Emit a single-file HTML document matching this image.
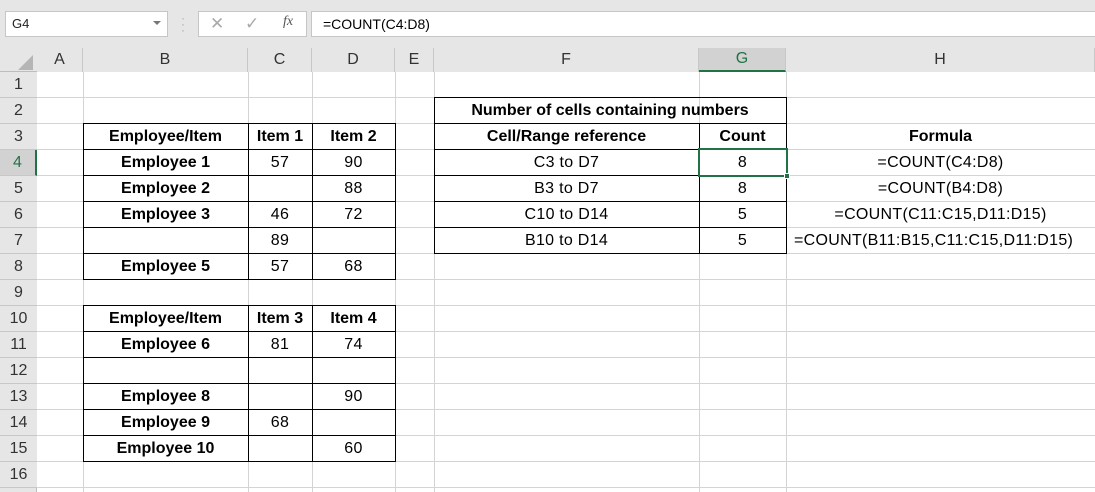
<!DOCTYPE html>
<html><head><meta charset="utf-8"><style>
*{margin:0;padding:0;box-sizing:border-box}
body{width:1095px;height:492px;overflow:hidden;background:#fff;font-family:"Liberation Sans",sans-serif;position:relative}
.a{position:absolute}
.top{left:0;top:0;width:1095px;height:48px;background:#e6e6e6}
.box{background:#fff;border:1px solid #c6c6c6}
.t{position:absolute;display:flex;align-items:center;justify-content:center;font-size:16px;letter-spacing:0.3px;color:#000;white-space:nowrap}
.b{font-weight:bold;letter-spacing:0}
.hd{position:absolute;display:flex;align-items:center;justify-content:center;font-size:16px;color:#333;background:#e6e6e6}
.k{position:absolute;border:1px solid #000}
</style></head><body>
<div class="a top"></div>
<div class="a box" style="left:5px;top:11px;width:163px;height:26px"></div>
<div class="a" style="left:12px;top:16px;font-size:13px;color:#222">G4</div>
<div class="a" style="left:153px;top:21px;width:0;height:0;border-left:4px solid transparent;border-right:4px solid transparent;border-top:4px solid #777"></div>
<div class="a" style="left:181px;top:15px;color:#aaa;font-size:12px;line-height:6px">·<br>·<br>·</div>
<div class="a box" style="left:198px;top:11px;width:109px;height:26px"></div>
<div class="a" style="left:210px;top:14px;color:#aaa;font-size:17px">✕</div>
<div class="a" style="left:245px;top:14px;color:#aaa;font-size:17px">✓</div>
<div class="a" style="left:283px;top:14px;color:#555;font-size:14px;font-style:italic;font-family:'Liberation Serif',serif">fx</div>
<div class="a box" style="left:311px;top:11px;width:790px;height:26px"></div>
<div class="a" style="left:323px;top:16px;font-size:14px;color:#000">=COUNT(C4:D8)</div>
<div id="g"></div>
<script>
var X=[0,37,83,248,312,395,434,699,786,1095];
var L="ABCDEFGH";
var h='';
function Y(n){return 71+26*(n-1);}
h+='<div class="a" style="left:0;top:48px;width:1095px;height:24px;background:#e6e6e6;border-bottom:1px solid #bdbdbd"></div>';
h+='<div class="a" style="left:0;top:72px;width:37px;height:420px;background:#e6e6e6;border-right:1px solid #bdbdbd"></div>';
h+='<div class="a" style="left:18px;top:55px;width:0;height:0;border-left:15px solid transparent;border-bottom:15px solid #b5b5b5"></div>';
for(var i=0;i<8;i++){var x1=X[i+1],x2=X[i+2];
 var bg=i==6?'background:#d2d2d2;border-bottom:2px solid #217346;color:#217346;':'';
 h+='<div class="hd" style="left:'+x1+'px;top:48px;width:'+(x2-x1)+'px;height:24px;'+bg+'border-right:1px solid #c8c8c8">'+L[i]+'</div>';
 h+='<div class="a" style="left:'+x2+'px;top:72px;width:1px;height:420px;background:#d4d4d4"></div>';}
for(var n=1;n<=16;n++){var y=Y(n);
 var bg=n==4?'background:#d2d2d2;color:#217346;border-right:2px solid #217346;':'';
 h+='<div class="hd" style="left:0;top:'+(y+1)+'px;width:37px;height:26px;'+bg+'border-bottom:1px solid #c8c8c8">'+n+'</div>';
 h+='<div class="a" style="left:37px;top:'+(y+26)+'px;width:1058px;height:1px;background:#d4d4d4"></div>';}
function cell(c1,c2,r,txt,b){var x1=X[c1],x2=X[c2+1],y=Y(r);
 h+='<div class="t'+(b?' b':'')+'" style="left:'+x1+'px;top:'+(y+1)+'px;width:'+(x2-x1)+'px;height:26px">'+txt+'</div>';}
function k(c1,c2,r){var x1=X[c1],x2=X[c2+1],y=Y(r);
 h+='<div class="k" style="left:'+x1+'px;top:'+y+'px;width:'+(x2-x1+1)+'px;height:27px"></div>';}
var t1=[[3,'Employee/Item','Item 1','Item 2',1],[4,'Employee 1','57','90'],[5,'Employee 2','','88'],[6,'Employee 3','46','72'],[7,'','89',''],[8,'Employee 5','57','68'],
[10,'Employee/Item','Item 3','Item 4',1],[11,'Employee 6','81','74'],[12,'','',''],[13,'Employee 8','','90'],[14,'Employee 9','68',''],[15,'Employee 10','','60']];
t1.forEach(function(r){k(2,2,r[0]);k(3,3,r[0]);k(4,4,r[0]);cell(2,2,r[0],r[1],1);cell(3,3,r[0],r[2],r[4]);cell(4,4,r[0],r[3],r[4]);});
k(6,7,2);cell(6,7,2,'Number of cells containing numbers',1);
var t2=[[3,'Cell/Range reference','Count',1],[4,'C3 to D7','8'],[5,'B3 to D7','8'],[6,'C10 to D14','5'],[7,'B10 to D14','5']];
t2.forEach(function(r){k(6,6,r[0]);k(7,7,r[0]);cell(6,6,r[0],r[1],r[3]);cell(7,7,r[0],r[2],r[3]);});
cell(8,8,3,'Formula',1);cell(8,8,4,'=COUNT(C4:D8)');cell(8,8,5,'=COUNT(B4:D8)');cell(8,8,6,'=COUNT(C11:C15,D11:D15)');
h+='<div class="t" style="left:794px;top:'+(Y(7)+1)+'px;height:26px;justify-content:flex-start">=COUNT(B11:B15,C11:C15,D11:D15)</div>';
h+='<div class="a" style="left:698px;top:'+(Y(4)-1)+'px;width:90px;height:29px;border:2px solid #217346"></div>';
h+='<div class="a" style="left:784px;top:'+(Y(4)+24)+'px;width:6px;height:6px;background:#217346;border:1px solid #fff"></div>';
document.getElementById('g').innerHTML=h;
</script>
</body></html>
